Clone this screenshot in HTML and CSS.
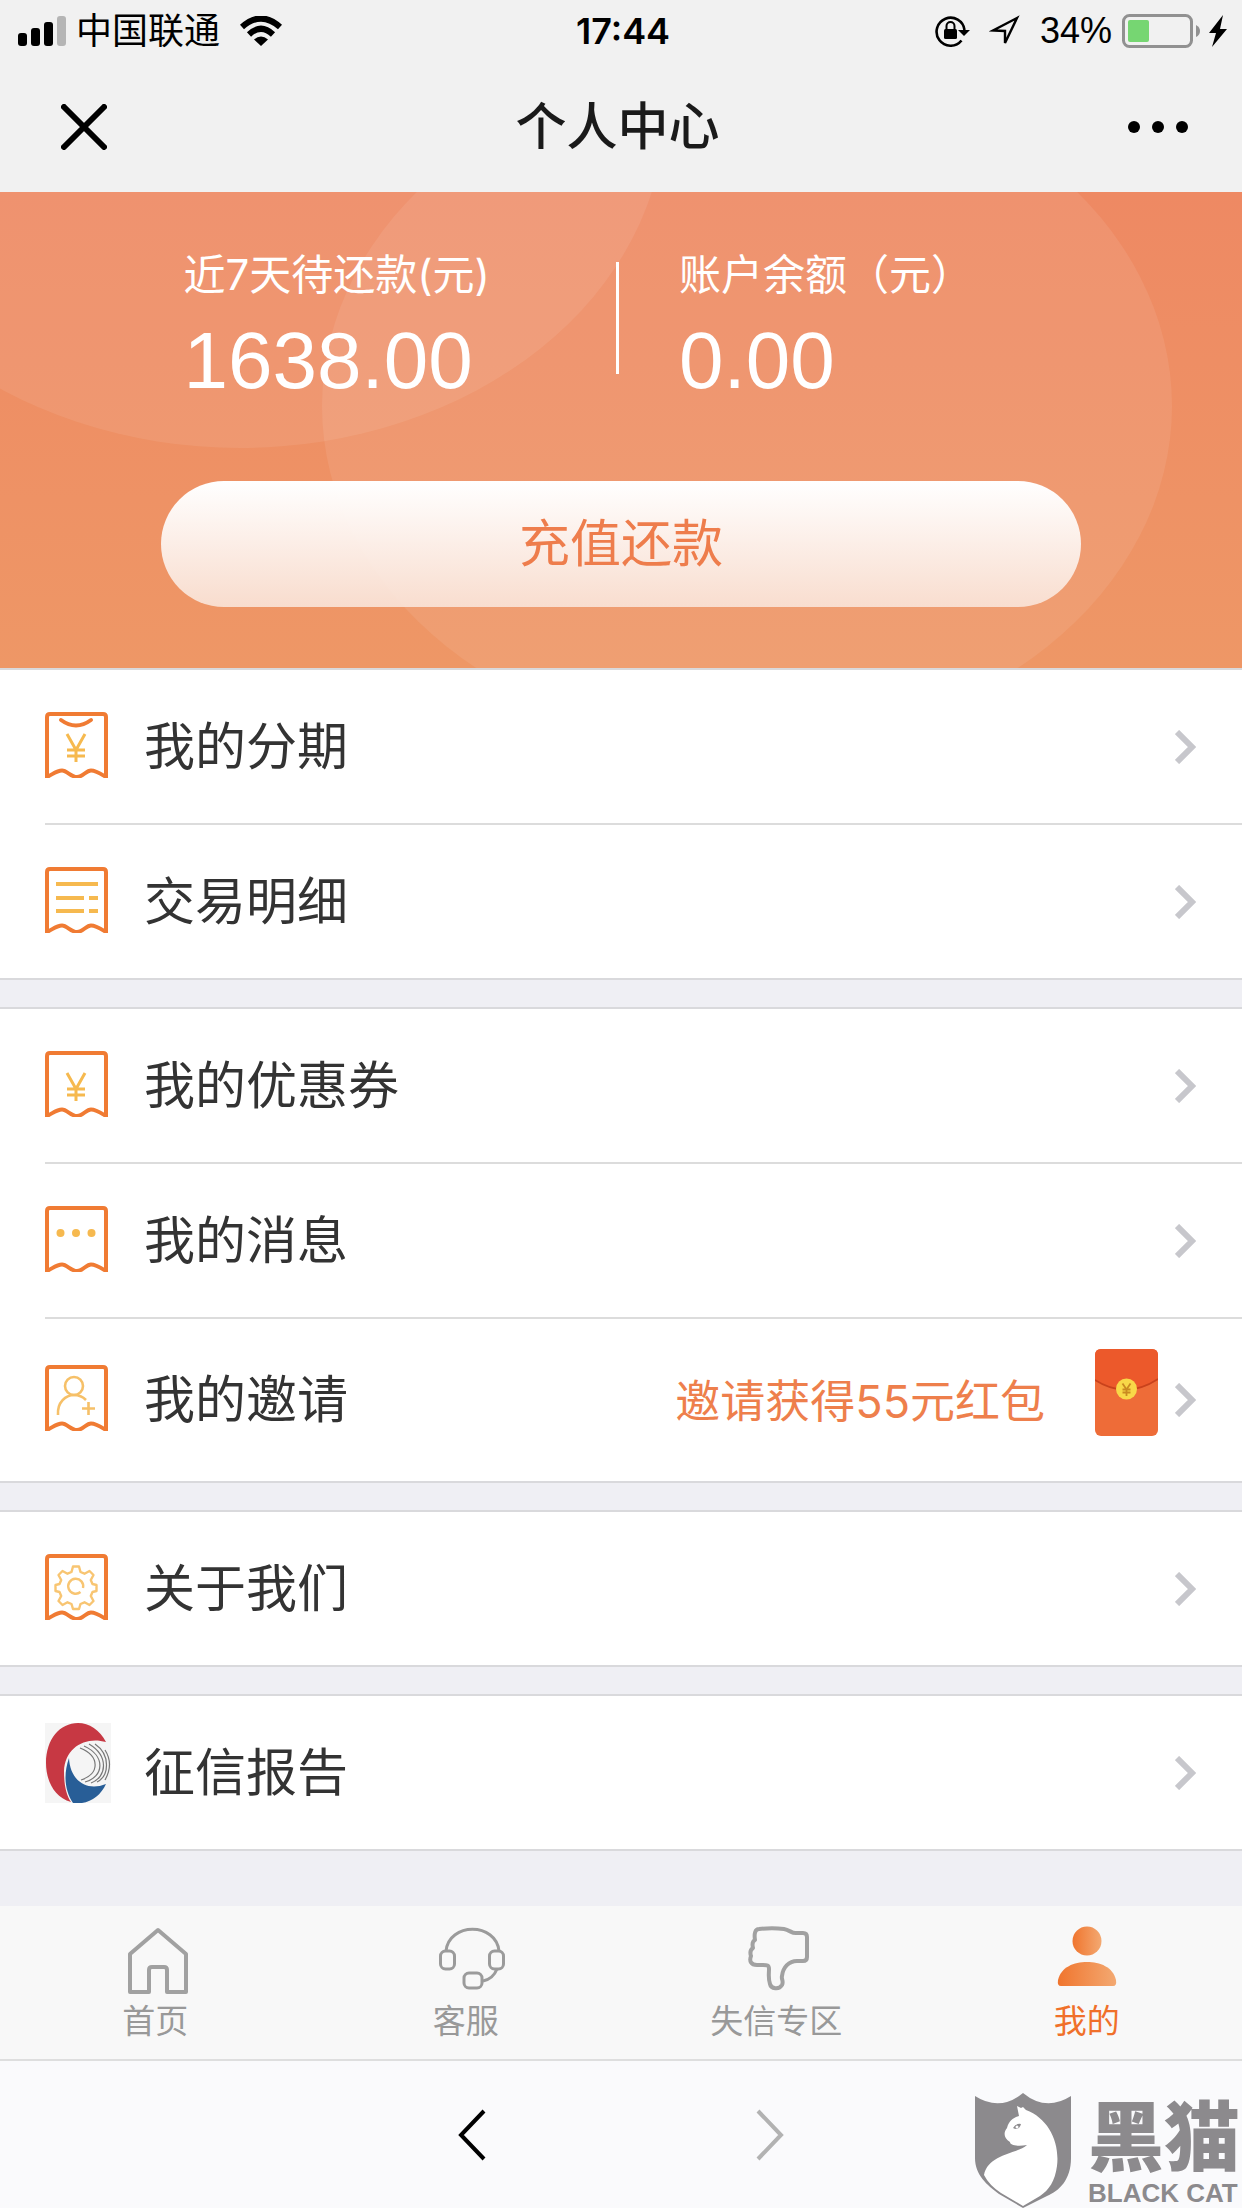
FILE: index.html
```html
<!DOCTYPE html>
<html lang="zh-CN">
<head>
<meta charset="utf-8">
<meta name="viewport" content="width=device-width, initial-scale=1">
<title>个人中心</title>
<link rel="stylesheet" href="styles.css">
</head>
<body>
<svg class="defs" aria-hidden="true">
  <defs>
    <symbol id="receipt" viewBox="0 0 63 66">
      <path d="M2 66V5q0-3 3-3h53q3 0 3 3v61" fill="none" stroke="#f07b33" stroke-width="4"/>
      <path d="M2 65C8 62 12 58.500 17 58.500S26 65 32 65 41 58.500 46 58.500 56 62 61 65" fill="none" stroke="#f07b33" stroke-width="4"/>
    </symbol>
    <symbol id="yen" viewBox="0 0 63 66">
      <path d="M22 22l9 16 9-16M31 37v13M22 38h18M22 44h18" fill="none" stroke="#f6b94f" stroke-width="3"/>
    </symbol>
    <symbol id="chevron" viewBox="0 0 21 34">
      <path d="M2 2l15 15L2 32" fill="none" stroke="#c7c7cc" stroke-width="6"/>
    </symbol>
    <linearGradient id="person-fill"><stop offset="0" stop-color="#f0752e"/><stop offset="1" stop-color="#f3a972"/></linearGradient>
  </defs>
</svg>
<div class="app">
  <header class="header">
    <div class="status">
      <div class="status-left">
        <svg width="49" height="31" viewBox="0 0 49 31"><rect y="17" width="9" height="13" rx="3"/><rect x="13" y="12" width="9" height="18" rx="3"/><rect x="26" y="6" width="9" height="24" rx="3"/><rect x="39" width="9" height="30" rx="3" fill="#b5b5b5"/></svg>
        <span class="carrier">中国联通</span>
        <svg class="wifi" width="42" height="31" viewBox="0 0 42 31"><path d="M2 11Q21-6 40 11M9 18.500Q21 7 33 18.500" fill="none" stroke="#000" stroke-width="6"/><path d="M21 30l-7-6.500q7-6 14 0z"/></svg>
      </div>
      <time class="clock">17:44</time>
      <div class="status-right">
        <svg width="36" height="32" viewBox="0 0 36 32"><path d="M26.500 25.500A14 14 0 1 1 29.500 15" fill="none" stroke="#000" stroke-width="2.600"/><path d="M23 15h12l-6 6z"/><rect x="9" y="14" width="13" height="10" rx="1.500"/><path d="M11.500 15v-4a4 4 0 0 1 8 0v4" fill="none" stroke="#000" stroke-width="2"/></svg>
        <svg class="location" width="31" height="32" viewBox="0 0 31 32"><path d="M28 3L4 15.500l12 .500v12z" fill="none" stroke="#000" stroke-width="2.400"/></svg>
        <span class="percent">34%</span>
        <svg width="106" height="34" viewBox="0 0 106 34"><rect x="1.500" y="1.500" width="68" height="31" rx="6" fill="none" stroke="#919191" stroke-width="3"/><rect x="6" y="6" width="21" height="22" rx="2" fill="#76d672"/><path d="M74 11q4 2 4 6t-4 6z" fill="#919191"/><path d="M101 1L87 19h7l-4 14 15-18h-7z"/></svg>
      </div>
    </div>
    <div class="titlebar">
      <button class="icon-button" aria-label="关闭"><svg width="46" height="46" viewBox="0 0 46 46"><path d="M3 3l40 40M43 3L3 43" stroke="#000" stroke-width="6" stroke-linecap="round"/></svg></button>
      <h1>个人中心</h1>
      <button class="icon-button" aria-label="更多"><svg width="60" height="12" viewBox="0 0 60 12"><circle cx="6" cy="6" r="6"/><circle cx="30" cy="6" r="6"/><circle cx="54" cy="6" r="6"/></svg></button>
    </div>
  </header>

  <main>
    <section class="hero">
      <svg class="hero-art" viewBox="0 0 1242 476" preserveAspectRatio="none" aria-hidden="true"><g fill="#fff" fill-opacity=".08"><ellipse cx="240" cy="-84" rx="425" ry="340"/><ellipse cx="747" cy="214" rx="425" ry="340"/></g></svg>
      <div class="balances">
        <div class="balance"><p>近7天待还款(元)</p><strong>1638.00</strong></div>
        <div class="balance"><p>账户余额（元）</p><strong>0.00</strong></div>
      </div>
      <button class="recharge">充值还款</button>
    </section>

    <nav class="groups" aria-label="菜单">
      <ul class="group">
        <li><a class="row" href="#installments">
          <svg class="row-icon" viewBox="0 0 63 66"><use href="#receipt"/><use href="#yen"/><path d="M16 8q15 11 30 0" fill="none" stroke="#f07b33" stroke-width="4" stroke-linecap="round"/></svg>
          <span class="label">我的分期</span><svg class="chevron"><use href="#chevron"/></svg></a></li>
        <li><a class="row" href="#transactions">
          <svg class="row-icon" viewBox="0 0 63 66"><use href="#receipt"/><path d="M11 17h42M11 31h28M44 31h9M11 44h28M44 44h9" stroke="#f6b94f" stroke-width="4"/></svg>
          <span class="label">交易明细</span><svg class="chevron"><use href="#chevron"/></svg></a></li>
      </ul>
      <ul class="group">
        <li><a class="row" href="#coupons">
          <svg class="row-icon" viewBox="0 0 63 66"><use href="#receipt"/><use href="#yen"/></svg>
          <span class="label">我的优惠券</span><svg class="chevron"><use href="#chevron"/></svg></a></li>
        <li><a class="row" href="#messages">
          <svg class="row-icon" viewBox="0 0 63 66"><use href="#receipt"/><g fill="#f6b94f"><circle cx="15.500" cy="27" r="4"/><circle cx="31" cy="27" r="4"/><circle cx="46.500" cy="27" r="4"/></g></svg>
          <span class="label">我的消息</span><svg class="chevron"><use href="#chevron"/></svg></a></li>
        <li><a class="row row-tall" href="#invite">
          <svg class="row-icon" viewBox="0 0 63 66"><use href="#receipt"/><g fill="none" stroke="#f6c068" stroke-width="2.600"><circle cx="29" cy="21" r="9"/><path d="M13 50c-1-13 8-20 16-20 5 0 9 2 12 5M37 43.500h13M43.500 37v13"/></g></svg>
          <span class="label">我的邀请</span>
          <span class="promo">邀请获得55元红包</span>
          <svg class="envelope" viewBox="0 0 63 87"><rect width="63" height="87" rx="6" fill="#ee6c38"/><path d="M0 31V6q0-6 6-6h51q6 0 6 6v25Q31 51 0 31z" fill="#ec592b"/><path d="M0 31q31 20 63-1" fill="none" stroke="#c8421c" stroke-width="1.500"/><circle cx="31.500" cy="40" r="10.500" fill="#f8d848"/><path d="M27.500 34.500l4 6 4-6M31.500 40v7M27.500 40.500h8M27.500 43.500h8" fill="none" stroke="#c98a20" stroke-width="1.800"/></svg>
          <svg class="chevron"><use href="#chevron"/></svg></a></li>
      </ul>
      <ul class="group">
        <li><a class="row" href="#about">
          <svg class="row-icon" viewBox="0 0 63 66"><use href="#receipt"/><g fill="none" stroke="#f8c572" stroke-width="2.400" stroke-linejoin="round"><path d="M28 12.500h6l1.500 5.500 4 1.700 5-2.700 4 4-2.700 5 1.700 4 4 1v6l-4 1-1.700 4 2.700 5-4 4-5-2.700-4 1.700-1.500 5h-6l-1.500-5-4-1.700-5 2.700-4-4 2.700-5-1.700-4-4-1v-6l4-1 1.700-4-2.700-5 4-4 5 2.700 4-1.700z"/><path d="M35.500 38A7.500 7.500 0 1 1 38 34"/></g></svg>
          <span class="label">关于我们</span><svg class="chevron"><use href="#chevron"/></svg></a></li>
      </ul>
      <ul class="group">
        <li><a class="row" href="#credit">
          <svg class="row-logo" viewBox="0 0 66 80"><path fill="#f5f5f5" d="M0 0h66v80H0z"/><path d="M26 79C8 74 1 56 1 40 1 16 15 0 33 0c11 0 22 7 28 19-20-6-41 5-42 29 0 13 2 24 7 31z" fill="#c73843"/><path d="M28 80C20 68 18 52 24 35c1 22 17 34 37 26-6 13-18 21-33 19z" fill="#285e97"/><g fill="none" stroke="#777" stroke-width="1.200"><path d="M35 25c20 8 20 26 1 32M39 23c22 10 20 31 1 36M44 21c20 12 18 33 2 39M50 21c16 11 14 32 2 38M60 27q9 14 0 30"/></g></svg>
          <span class="label">征信报告</span><svg class="chevron"><use href="#chevron"/></svg></a></li>
      </ul>
    </nav>
  </main>

  <footer class="footer">
    <nav class="tabs" aria-label="主导航">
      <a href="#home"><svg viewBox="0 0 84 72"><path d="M17 28L45 4l28 24v38H54V44q0-3-3-3H39q-3 0-3 3v22H17z" fill="none" stroke="#a1a1a1" stroke-width="4" stroke-linejoin="round"/></svg>首页</a>
      <a href="#service"><svg viewBox="0 0 84 72"><g fill="none" stroke="#9b9b9b" stroke-width="3"><path d="M22 25C25-4 72-4 75 25M73 43q-4 10-14 12"/><rect x="16.500" y="25" width="14" height="18" rx="5"/><rect x="65.500" y="25" width="14" height="18" rx="5"/><rect x="40" y="47" width="18" height="15" rx="5"/></g></svg>客服</a>
      <a href="#dishonest"><svg viewBox="0 0 84 72"><path d="M25 3c8-1 18-1 25 0 6 1 8 5 13 4h6q4 0 4 4v20q0 4-4 4h-6c-8 0-14 6-15 15-1 3 2 5 0 9-3 5-11 4-12-1-2-6-1-10-1-15 0-4-2-4-6-4h-6c-6 0-8-4-6-9-1-3-1-6 2-8-1-4 0-7 2-8-1-6 0-11 4-11z" fill="none" stroke="#a1a1a1" stroke-width="4" stroke-linejoin="round"/></svg>失信专区</a>
      <a class="active" href="#me" aria-current="page"><svg viewBox="0 0 84 72"><g fill="url(#person-fill)"><circle cx="42" cy="15" r="14.500"/><path d="M16 60q-4 0-3-6c3-13 16-18 29-18s26 5 29 18q1 6-3 6z"/></g></svg>我的</a>
    </nav>
    <div class="browser-bar">
      <button class="icon-button" aria-label="后退"><svg width="28" height="52" viewBox="0 0 28 52"><path d="M26 2L3 26l23 24" fill="none" stroke="#000" stroke-width="4"/></svg></button>
      <button class="icon-button" aria-label="前进"><svg width="28" height="52" viewBox="0 0 28 52"><path d="M2 2l23 24L2 50" fill="none" stroke="#b2b2b2" stroke-width="4"/></svg></button>
    </div>
    <div class="watermark">
      <svg width="98" height="115" viewBox="0 0 98 115"><path d="M1 3q25 16 48-3 23 19 48 3v62c0 22-12 33-24 38l-24 12-24-14C13 92 1 82 1 65z" fill="#8c8a8d"/><path d="M10 82c4-21 33-21 43-30-10 2-17 0-17-3-6-4-7-9-3-14 2-7 6-10 12-12l-2-10 4 2 2-1 3 3c22 8 34 32 31 56-2 15-8 24-17 30L49 113 27 100Q15 92 10 82z" fill="#fff"/><path d="M39 35q3-5 8-4-2 7-8 4z" fill="#8c8a8d"/><circle cx="43" cy="34" r="1.500" fill="#fff"/></svg>
      <div class="watermark-text"><span class="brand">黑猫</span><span class="brand-en">BLACK CAT</span></div>
    </div>
  </footer>
</div>
</body>
</html>
```
FILE: styles.css
```css
* { box-sizing: border-box; }

body {
  margin: 0;
  background: #efeff4;
  color: #333;
  font-family: Inter, "Noto Sans CJK SC", sans-serif;
}

h1, p, ul { margin: 0; padding: 0; }
ul { list-style: none; }
a { color: inherit; text-decoration: none; }
svg { display: block; flex: none; }
button { padding: 0; border: 0; background: none; font: inherit; cursor: pointer; }

.defs { position: absolute; width: 0; height: 0; }

.app {
  display: flex;
  flex-direction: column;
  min-height: 100vh;
}

/* Header */
.header { background: #f1f1f1; color: #000; }

.status {
  display: grid;
  grid-template-columns: 1fr auto 1fr;
  align-items: center;
  height: 62px;
  padding: 0 14px 0 18px;
}

.status-left, .status-right { display: flex; align-items: center; }
.status-right { justify-content: flex-end; }
.carrier { margin: 0 20px 0 9px; font-size: 36px; line-height: 48px; }
.clock { font-size: 36px; font-weight: 600; }
.location { margin: 0 20px 0 18px; }
.percent { margin-right: 10px; font-family: "Liberation Sans", Arial, sans-serif; font-size: 36px; }

.titlebar {
  display: flex;
  align-items: center;
  justify-content: space-between;
  height: 130px;
  padding: 0 54px 0 61px;
}

.titlebar h1 { font-size: 51px; font-weight: 500; line-height: 72px; color: #1a1a1a; }
.icon-button { display: flex; align-items: center; justify-content: center; }

/* Balance panel */
.hero {
  position: relative;
  display: flex;
  flex-direction: column;
  align-items: center;
  padding: 53px 0 61px;
  background: linear-gradient(#ee8963, #ee9766);
  color: #fff;
}

.hero-art { position: absolute; inset: 0; width: 100%; height: 100%; }
.balances, .recharge { position: relative; width: 74%; }

.balances {
  display: grid;
  grid-template-columns: 1fr 1fr;
  margin-bottom: 38px;
}

.balance { padding-left: 22px; }
.balance + .balance { padding-left: 58px; }
.balance p { font-size: 42px; line-height: 60px; white-space: nowrap; }

.balance strong {
  display: block;
  padding-bottom: 26px;
  font-family: "Liberation Sans", Arial, sans-serif;
  font-size: 80px;
  font-weight: 400;
  line-height: 112px;
}

.balances::after {
  content: "";
  position: absolute;
  left: 455px;
  top: 17px;
  width: 3px;
  height: 112px;
  background: #fff;
}

.recharge {
  height: 126px;
  border-radius: 63px;
  background: linear-gradient(#fff, rgba(250, 231, 221, .87));
  color: #ee7d4c;
  font-size: 51px;
  line-height: 72px;
}

/* Menu */
.groups { display: grid; gap: 27px; }
.group { background: #fff; border-top: 2px solid #d9d9dc; border-bottom: 2px solid #d9d9dc; }
.group li + li { margin-left: 45px; border-top: 2px solid #dcdcdc; }
.group li + li .row { padding-left: 0; }

.row {
  display: flex;
  align-items: center;
  height: 153px;
  padding: 0 46px 0 45px;
}

.row-tall { height: 162px; }
.row-icon { width: 63px; height: 66px; margin: 0 36px 4px 0; }
.row-logo { width: 66px; height: 80px; margin: 0 33px 20px 0; }
.label { flex: 1; font-size: 51px; line-height: 72px; white-space: nowrap; }
.promo { margin: 4px 50px 0 0; color: #ee7f4c; font-size: 45px; line-height: 64px; white-space: nowrap; }
.envelope { width: 63px; height: 87px; margin: 0 17px 16px 0; }
.chevron { width: 21px; height: 34px; }

/* Bottom bars */
.footer { position: relative; margin-top: auto; }

.tabs {
  display: grid;
  grid-template-columns: repeat(4, 1fr);
  height: 155px;
  padding-top: 20px;
  background: #f8f8f8;
  border-bottom: 2px solid #dedede;
}

.tabs a {
  display: flex;
  flex-direction: column;
  align-items: center;
  color: #999;
  font-size: 33px;
  line-height: 46px;
}

.tabs svg { width: 84px; height: 72px; }
.tabs .active { color: #f0702a; }

.browser-bar {
  display: flex;
  align-items: center;
  justify-content: center;
  gap: 270px;
  height: 147px;
  background: #fafafc;
}

.watermark {
  position: absolute;
  right: 2px;
  bottom: 0;
  display: flex;
  gap: 16px;
  color: #8c8a8d;
}

.watermark-text { display: flex; flex-direction: column; }
.brand { font-size: 76px; font-weight: 900; line-height: 88px; }
.brand-en { font-family: "Liberation Sans", Arial, sans-serif; font-size: 26px; font-weight: 700; line-height: 24px; white-space: nowrap; }
```
